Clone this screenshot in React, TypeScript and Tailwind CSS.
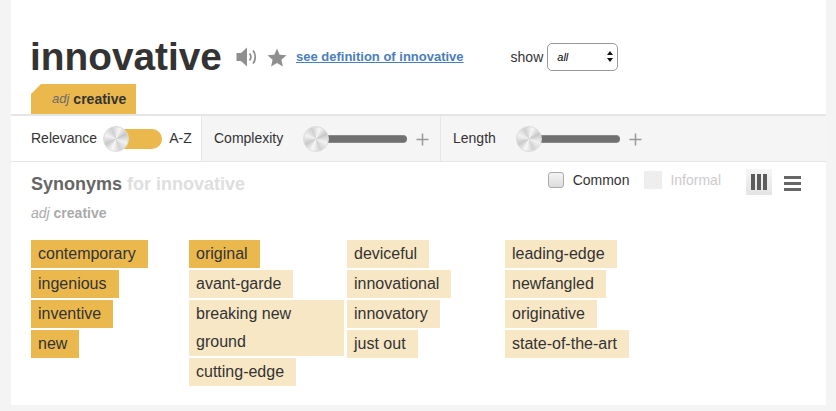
const metal =
  "bg-[conic-gradient(from_20deg,#f6f6f6,#c8c8c8_12%,#f2f2f2_25%,#d2d2d2_38%,#f8f8f8_50%,#c9c9c9_62%,#f2f2f2_75%,#d0d0d0_88%,#f6f6f6)]";

type Syn = { word: string; strong?: boolean };

const columns: Syn[][] = [
  [
    { word: "contemporary", strong: true },
    { word: "ingenious", strong: true },
    { word: "inventive", strong: true },
    { word: "new", strong: true },
  ],
  [
    { word: "original", strong: true },
    { word: "avant-garde" },
    { word: "breaking new ground" },
    { word: "cutting-edge" },
  ],
  [{ word: "deviceful" }, { word: "innovational" }, { word: "innovatory" }, { word: "just out" }],
  [{ word: "leading-edge" }, { word: "newfangled" }, { word: "originative" }, { word: "state-of-the-art" }],
];

function Knob() {
  return <div className={`relative z-10 w-[26px] h-[26px] rounded-full shrink-0 border border-[#dcdcdc] ${metal}`} />;
}

function Slider({ label, knobMargin }: { label: string; knobMargin: string }) {
  return (
    <>
      <span className={`text-[14px] text-[#333] ${knobMargin}`}>{label}</span>
      <div className="flex items-center">
        <Knob />
        <div className="w-[79px] h-[8px] -ml-[1px] rounded-r-full bg-[#707070] border-y border-[#8a8a8a]" />
      </div>
      <svg width="13" height="13" viewBox="0 0 13 13" className="ml-[9px] mt-[1px]">
        <path d="M6.5 0.5v12M0.5 6.5h12" stroke="#999" strokeWidth="1.5" />
      </svg>
    </>
  );
}

export default function App() {
  return (
    <div className="w-[836px] h-[411px] overflow-hidden bg-[#f4f4f4] font-['Liberation_Sans',Arial,sans-serif]">
      <div className="ml-[11px] w-[815px] h-[405px] bg-white">
        {/* Headword */}
        <div className="h-[84px] pl-[19px] pt-[35px] flex items-start">
          <h1 className="w-[192px] text-[38.8px] leading-[44px] font-bold text-[#333]">innovative</h1>
          <svg width="22" height="22" viewBox="0 0 22 22" className="ml-[14px] mt-[11px]" fill="#8f8f8f">
            <path d="M0.500 7h4.500l6-5.500v19L5 15H0.500z" />
            <path d="M13.500 7.500c1.600 2 1.600 5 0 7" stroke="#8f8f8f" strokeWidth="1.800" fill="none" />
            <path d="M17 4.500c3 3.500 3 9.500 0 13" stroke="#8f8f8f" strokeWidth="1.800" fill="none" />
          </svg>
          <svg width="20" height="19" viewBox="0 0 20 19" className="ml-[9px] mt-[13px]" fill="#8f8f8f">
            <path d="M10 0.500l2.700 6.200 6.800.6-5.100 4.500 1.500 6.700L10 15l-5.900 3.500 1.500-6.700L.5 7.300l6.800-.6z" />
          </svg>
          <a className="ml-[9px] mt-[14px] text-[13px] leading-[16px] font-bold text-[#4a7ebb] underline">
            see definition of innovative
          </a>
          <span className="ml-[47px] mt-[13px] text-[14px] leading-[18px] text-[#333]">show</span>
          <div className="relative ml-[4px] mt-[8px]">
            <select className="block w-[71px] h-[28px] pl-[9px] appearance-none bg-white border border-[#999] rounded-[5px] text-[11px] italic text-black">
              <option>all</option>
            </select>
            <svg width="6" height="11" viewBox="0 0 6 11" className="absolute right-[5px] top-[8px]" fill="#111">
              <path d="M3 0l3 4H0zM3 11L0 7h6z" />
            </svg>
          </div>
        </div>

        {/* Sense tab */}
        <div className="pl-[20px] flex">
          <div className="w-[105px] h-[30px] pl-[21px] flex items-center gap-[4px] bg-[#ebb84e] [clip-path:polygon(10px_0,100%_0,100%_100%,0_100%,0_10px)]">
            <span className="text-[13px] italic text-[#6b6b6b]">adj</span>
            <span className="text-[14px] font-bold text-[#333]">creative</span>
          </div>
        </div>

        {/* Filter bar */}
        <div className="h-[48px] flex border-y-2 border-b border-[#e6e6e6]">
          <div className="w-[191px] pl-[20px] flex items-center bg-white border-r border-[#e6e6e6]">
            <span className="text-[14px] text-[#333]">Relevance</span>
            <div className="flex items-center ml-[6px]">
              <Knob />
              <div className="w-[45px] h-[20px] -ml-[12px] rounded-r-full bg-[#ebb84e]" />
            </div>
            <span className="ml-[7px] text-[14px] text-[#333]">A-Z</span>
          </div>
          <div className="w-[239px] pl-[12px] flex items-center bg-[#f5f5f5] border-r border-[#e6e6e6]">
            <Slider label="Complexity" knobMargin="mr-[20px]" />
          </div>
          <div className="flex-1 pl-[12px] flex items-center bg-[#f5f5f5]">
            <Slider label="Length" knobMargin="mr-[20px]" />
          </div>
        </div>

        {/* Results */}
        <div className="pl-[20px] pr-[25px] flex justify-between items-start pt-[10px] h-[42px]">
          <h2 className="text-[18px] leading-[24px] font-bold text-[#666]">
            Synonyms <span className="text-[#dedede]">for innovative</span>
          </h2>
          <div className="flex items-start -mt-[3px]">
            <div className="mt-[3px] w-[16px] h-[16px] rounded-[3px] border border-[#aaa] bg-gradient-to-b from-[#f4f4f4] to-[#dcdcdc]" />
            <span className="ml-[9px] mt-[3px] text-[14px] leading-[16px] text-[#333]">Common</span>
            <div className="ml-[15px] mt-[2px] w-[18px] h-[18px] bg-[#eeeeee]" />
            <span className="ml-[8px] mt-[3px] text-[14px] leading-[16px] text-[#cccccc]">Informal</span>
            <div className="ml-[25px] w-[26px] h-[26px] flex items-center justify-center gap-[2px] bg-gradient-to-b from-[#f6f6f6] to-[#e4e4e4]">
              <div className="w-[4px] h-[16px] bg-[#5c5c5c]" />
              <div className="w-[4px] h-[16px] bg-[#5c5c5c]" />
              <div className="w-[4px] h-[16px] bg-[#5c5c5c]" />
            </div>
            <div className="ml-[12px] mt-[7px] w-[17px] flex flex-col gap-[3px]">
              <div className="h-[3px] bg-[#666]" />
              <div className="h-[3px] bg-[#666]" />
              <div className="h-[3px] bg-[#666]" />
            </div>
          </div>
        </div>

        <div className="pl-[20px] text-[14px] leading-[18px] text-[#aaa]">
          <span className="italic">adj</span> <span className="font-bold">creative</span>
        </div>

        <div className="pl-[20px] mt-[18px] flex">
          {columns.map((col, i) => (
            <div key={i} className="w-[158px] flex flex-col items-start gap-[2px]">
              {col.map((s) => (
                <div
                  key={s.word}
                  className={`max-w-[155px] pl-[7px] pr-[12px] text-[16px] leading-[28px] text-[#333] ${
                    s.strong ? "bg-[#ebb84e]" : "bg-[#f8e7c5]"
                  }`}
                >
                  {s.word}
                </div>
              ))}
            </div>
          ))}
        </div>
      </div>
    </div>
  );
}
